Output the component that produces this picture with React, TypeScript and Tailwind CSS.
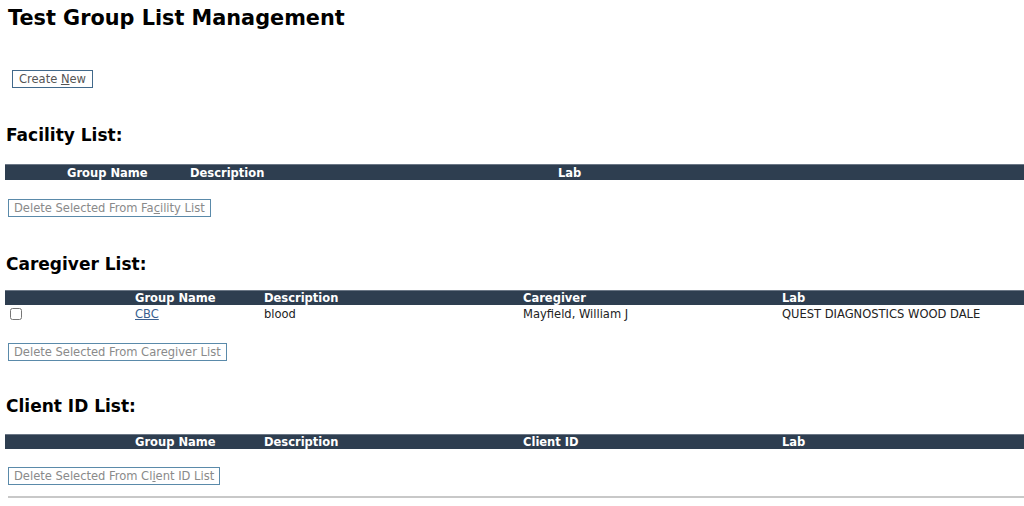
const body = { fontFamily: '"DejaVu Sans Condensed", "DejaVu Sans", sans-serif' };
const head = { fontFamily: '"DejaVu Sans", Verdana, sans-serif' };

function Heading({ children, top }: { children: string; top: string }) {
  return (
    <h2 className={`pl-[6px] text-[17px] font-bold leading-[20px] ${top}`} style={head}>
      {children}
    </h2>
  );
}

function DeleteButton({ children }: { children: React.ReactNode }) {
  return (
    <button className="h-[18px] border border-[#5a8aaa] bg-white px-[5px] text-[12.8px] leading-[14px] text-[#8a8a8a]">
      {children}
    </button>
  );
}

export default function App() {
  return (
    <div className="bg-white text-black" style={body}>
      <h1 className="pl-2 pt-[6px] text-[20.8px] font-bold leading-[24px]" style={head}>
        Test Group List Management
      </h1>

      <div className="mt-[40px] flex pl-3">
        <button className="h-[18px] border border-[#41698b] bg-white px-[6px] text-[12.8px] leading-[14px] text-[#555]">
          Create <u>N</u>ew
        </button>
      </div>

      {/* Facility */}
      <Heading top="mt-[37px]">Facility List:</Heading>
      <div className="mt-[19px] pl-[5px]">
        <div
          className="flex h-[16px] items-center border-t border-[#6b7786] bg-[#2e3e50] text-[11.5px] font-bold leading-[14px] text-white"
          style={head}
        >
          <span className="w-[62px]" />
          <span className="w-[123px]">Group Name</span>
          <span className="w-[368px]">Description</span>
          <span>Lab</span>
        </div>
      </div>
      <div className="mt-[19px] flex pl-2">
        <DeleteButton>
          Delete Selected From Fa<u>c</u>ility List
        </DeleteButton>
      </div>

      {/* Caregiver */}
      <Heading top="mt-[37px]">Caregiver List:</Heading>
      <div className="mt-[16px] pl-[5px]">
        <div
          className="flex h-[15px] items-center border-t border-[#6b7786] bg-[#2e3e50] text-[11.5px] font-bold leading-[14px] text-white"
          style={head}
        >
          <span className="w-[130px]" />
          <span className="w-[129px]">Group Name</span>
          <span className="w-[259px]">Description</span>
          <span className="w-[259px]">Caregiver</span>
          <span>Lab</span>
        </div>
        <div className="flex h-[17px] items-center text-[12.8px] leading-[14px] text-[#222]">
          <span className="w-[130px] pl-[5px]">
            <input type="checkbox" className="m-0 block h-[12px] w-[12px] accent-gray-400" />
          </span>
          <span className="w-[129px]">
            <a href="#" className="text-[#3a5f8f] underline">
              CBC
            </a>
          </span>
          <span className="w-[259px]">blood</span>
          <span className="w-[259px]">Mayfield, William J</span>
          <span>QUEST DIAGNOSTICS WOOD DALE</span>
        </div>
      </div>
      <div className="mt-[21px] flex pl-2">
        <DeleteButton>Delete Selected From Caregiver List</DeleteButton>
      </div>

      {/* Client ID */}
      <Heading top="mt-[35px]">Client ID List:</Heading>
      <div className="mt-[18px] pl-[5px]">
        <div
          className="flex h-[15px] items-center border-t border-[#6b7786] bg-[#2e3e50] text-[11.5px] font-bold leading-[14px] text-white"
          style={head}
        >
          <span className="w-[130px]" />
          <span className="w-[129px]">Group Name</span>
          <span className="w-[259px]">Description</span>
          <span className="w-[259px]">Client ID</span>
          <span>Lab</span>
        </div>
      </div>
      <div className="mt-[18px] flex pl-2">
        <DeleteButton>
          Delete Selected From Cl<u>i</u>ent ID List
        </DeleteButton>
      </div>

      <div className="mt-[11px] pl-2">
        <hr className="border-t-2 border-[#c8c8c8]" />
      </div>
    </div>
  );
}
